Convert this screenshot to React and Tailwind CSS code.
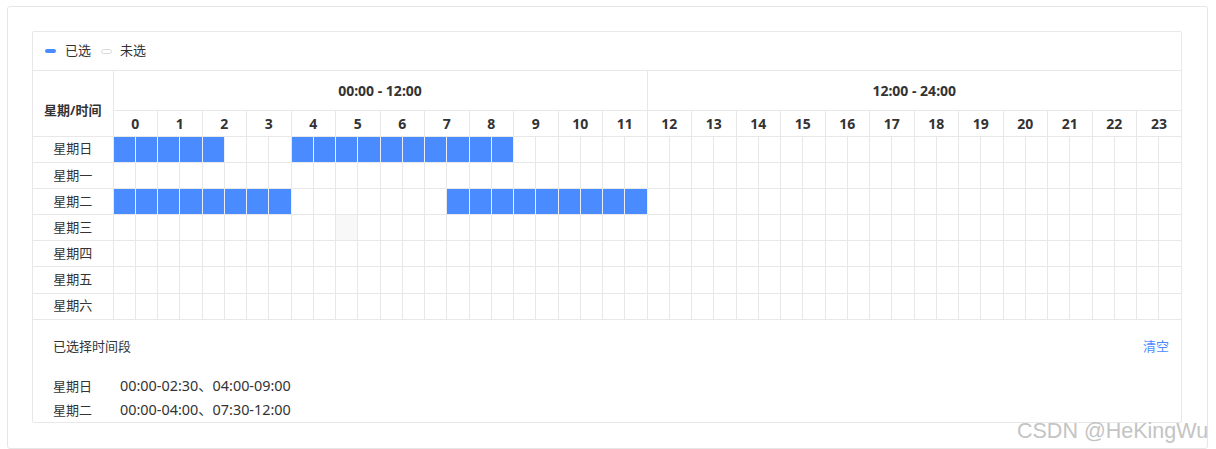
import React from 'react';

const font = { fontFamily: '"Segoe UI", "Noto Sans", "Noto Sans CJK SC", sans-serif' };

const days = ['星期日', '星期一', '星期二', '星期三', '星期四', '星期五', '星期六'];
const hours = Array.from({ length: 24 }, (_, i) => i);

// half-hour slots that are picked, by day index
const picked = {
  0: [[0, 4], [8, 17]],
  2: [[0, 7], [15, 23]],
};

function isPicked(day, slot) {
  const ranges = picked[day] || [];
  return ranges.some(([a, b]) => slot >= a && slot <= b);
}

export default function App() {
  return (
    <div className="w-[1216px] h-[449px] bg-white pt-[6px] pl-[7px] relative text-[#333]" style={font}>
      <div className="w-[1201px] h-[443px] border border-[#e6e6e6] rounded-[3px] p-[24px]">
        <div className="w-[1150px] border border-[#e8e8e8] rounded-[2px]">
          {/* legend */}
          <div className="h-[39px] flex items-center pl-[12px] text-[13px] border-b border-[#e8e8e8]">
            <span className="w-[11px] h-[4px] rounded-full bg-[#4a8cff]" />
            <span className="ml-[9px]">已选</span>
            <span className="w-[11px] h-[5px] rounded-full border border-[#d9d9d9] ml-[10px]" />
            <span className="ml-[8px]">未选</span>
          </div>

          <table className="w-full table-fixed border-collapse text-[13px]">
            <colgroup>
              <col className="w-[80px]" />
              {Array.from({ length: 48 }, (_, i) => (
                <col key={i} />
              ))}
            </colgroup>
            <thead>
              <tr className="h-[39px]">
                <th rowSpan={2} className="border-r border-b border-[#e8e8e8] font-bold text-[13px] pt-[14px]">
                  星期/时间
                </th>
                <th colSpan={24} className="border-r border-b border-[#e8e8e8] font-bold text-[14px]">
                  00:00 - 12:00
                </th>
                <th colSpan={24} className="border-b border-[#e8e8e8] font-bold text-[14px]">
                  12:00 - 24:00
                </th>
              </tr>
              <tr className="h-[26px]">
                {hours.map((h) => (
                  <th
                    key={h}
                    colSpan={2}
                    className={`border-b border-[#e8e8e8] font-bold text-[14px] ${h === 23 ? '' : 'border-r'}`}
                  >
                    {h}
                  </th>
                ))}
              </tr>
            </thead>
            <tbody>
              {days.map((d, di) => (
                <tr key={d} className="h-[26.2px]">
                  <td className="text-center border-r border-b border-[#e8e8e8]">{d}</td>
                  {Array.from({ length: 48 }, (_, s) => {
                    const on = isPicked(di, s);
                    const hover = di === 3 && s === 10;
                    return (
                      <td
                        key={s}
                        className={`border-b border-[#e8e8e8] ${s === 47 ? '' : 'border-r'} ${
                          on ? 'bg-[#4a8cff] border-r-[#e9eefa]' : hover ? 'bg-[#f8f8f8]' : ''
                        }`}
                      />
                    );
                  })}
                </tr>
              ))}
            </tbody>
          </table>

          {/* selected list */}
          <div className="pl-[20px] pr-[12px] pt-[17px] pb-[0px] text-[13px]">
            <div className="flex justify-between items-center h-[20px]">
              <span>已选择时间段</span>
              <span className="text-[#4a8cff] cursor-pointer">清空</span>
            </div>
            <div className="mt-[17px] leading-[24px]">
              <div className="flex">
                <span className="w-[67px]">星期日</span>
                <span className="text-[14.4px]">00:00-02:30、04:00-09:00</span>
              </div>
              <div className="flex">
                <span className="w-[67px]">星期二</span>
                <span className="text-[14.4px]">00:00-04:00、07:30-12:00</span>
              </div>
            </div>
          </div>
        </div>
      </div>

      <div
        className="absolute left-[1017px] top-[415px] text-[21.5px] text-[#c4c4c4] pointer-events-none"
        style={{ fontFamily: '"Liberation Sans", Arial, sans-serif' }}
      >
        CSDN @HeKingWu
      </div>
    </div>
  );
}
